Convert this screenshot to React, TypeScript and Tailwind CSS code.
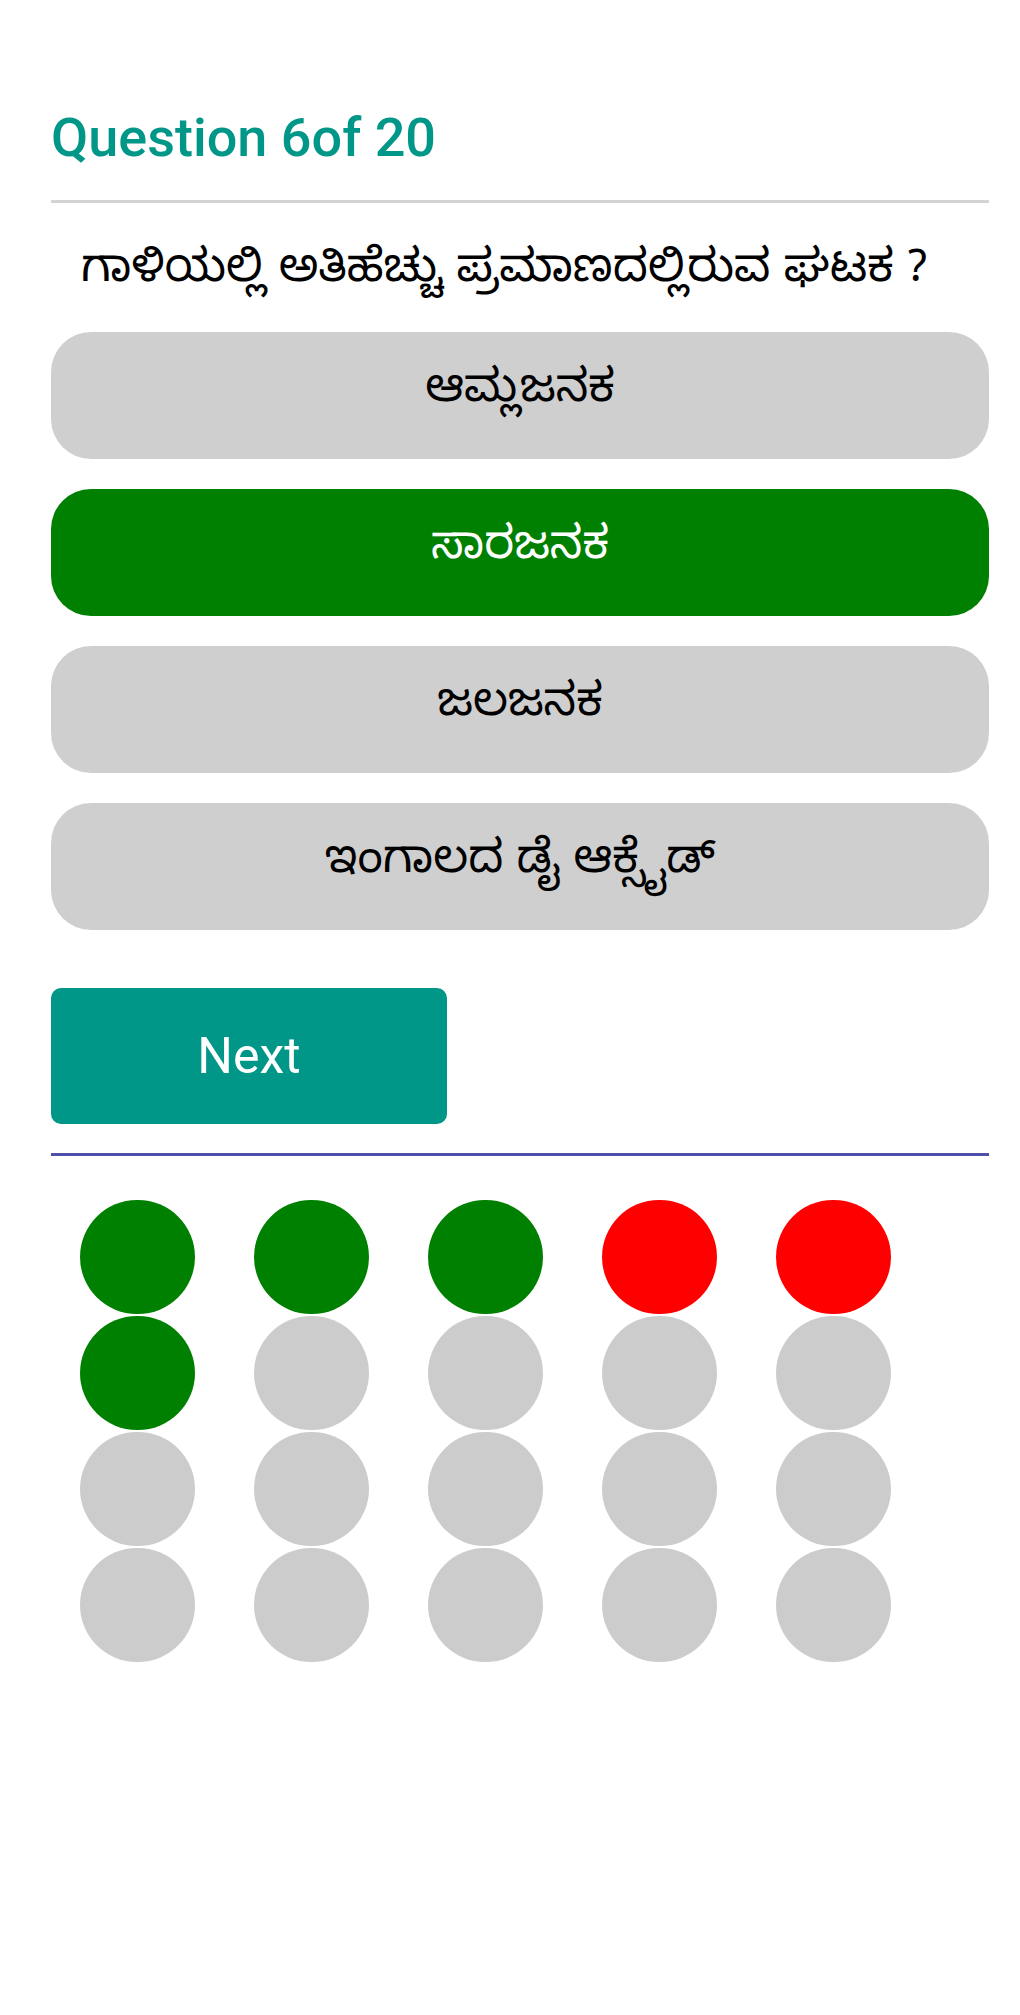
import { useState } from "react";

const options = ["ಆಮ್ಲಜನಕ", "ಸಾರಜನಕ", "ಜಲಜನಕ", "ಇಂಗಾಲದ ಡೈ ಆಕ್ಸೈಡ್"];

// 20 questions: answered ones are green / red, rest still grey
const results = [
  "right", "right", "right", "wrong", "wrong",
  "right", "", "", "", "",
  "", "", "", "", "",
  "", "", "", "", "",
];

const kn = { fontFamily: '"Noto Sans Kannada", "Noto Sans", "Lohit Kannada", sans-serif' };

export default function App() {
  const [picked, setPicked] = useState(1);

  return (
    <div className="min-h-[2015px] w-[1020px] bg-white pl-[51px] pr-[31px] pt-[110px]">
      <h1
        className="text-[54px] font-medium leading-[56px] text-[#009688]"
        style={{ fontFamily: "Roboto, Arial, sans-serif" }}
      >
        Question 6of 20
      </h1>

      <div className="mt-[34px] h-[3px] bg-[#d3d3d3]" />

      <p className="mt-[42px] pl-[30px] text-[46px] leading-[60px] text-black" style={kn}>
        ಗಾಳಿಯಲ್ಲಿ ಅತಿಹೆಚ್ಚು ಪ್ರಮಾಣದಲ್ಲಿರುವ ಘಟಕ ?
      </p>

      <div className="mt-[27px] flex flex-col gap-[30px]">
        {options.map((opt, i) => (
          <button
            key={opt}
            onClick={() => setPicked(i)}
            className={
              "flex h-[127px] w-full items-center justify-center rounded-[40px] text-[46px] " +
              (picked === i ? "bg-[#008000] text-white" : "bg-[#cfcfcf] text-black")
            }
            style={kn}
          >
            {opt}
          </button>
        ))}
      </div>

      <button
        className="mt-[58px] flex h-[136px] w-[396px] items-center justify-center rounded-[10px] bg-[#009688] text-[50px] text-white"
        style={{ fontFamily: "Roboto, Arial, sans-serif" }}
      >
        Next
      </button>

      <div className="mt-[29px] h-[3px] bg-[#5050ac]" />

      <div className="ml-[29px] mt-[44px] grid grid-cols-[repeat(5,174px)] gap-y-[2px]">
        {results.map((r, i) => (
          <div
            key={i}
            className={
              "h-[114px] w-[115px] rounded-full " +
              (r === "right" ? "bg-[#008000]" : r === "wrong" ? "bg-[#ff0000]" : "bg-[#cccccc]")
            }
          />
        ))}
      </div>
    </div>
  );
}
